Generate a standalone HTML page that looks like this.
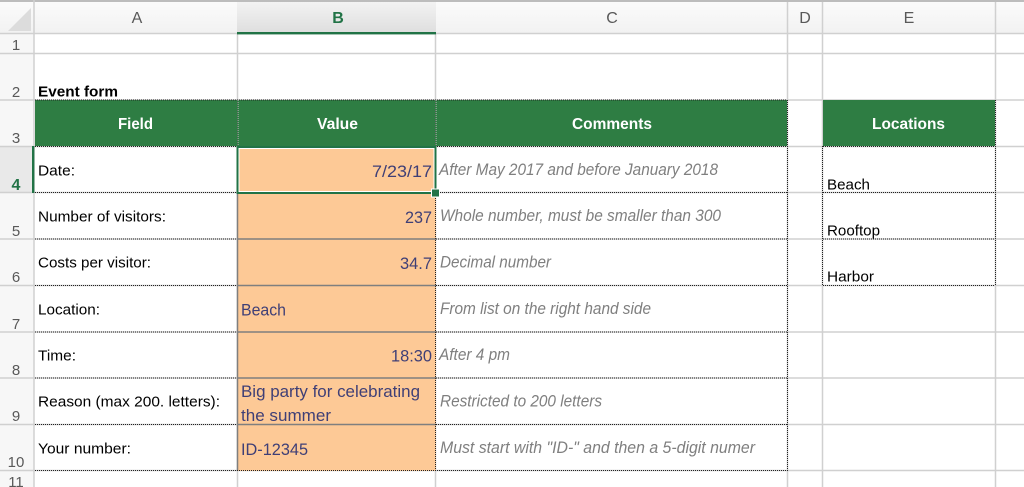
<!DOCTYPE html>
<html lang="en"><head><meta charset="utf-8"><title>Event form</title>
<style>
html,body{margin:0;padding:0;background:#fff;width:1024px;height:487px;overflow:hidden}
svg{display:block}
text{font-family:"Liberation Sans",sans-serif}
.h{font-size:16px;fill:#595959;text-anchor:middle}
.r{font-size:15px;fill:#595959;text-anchor:middle}
.l{font-size:15px;fill:#000}
.w{font-size:15.5px;fill:#fff;font-weight:bold}
.v{font-size:17px;fill:#3f3f76}
.c{font-size:16.5px;fill:#7f7f7f;font-style:italic}
.g{stroke:#d0d0d0;stroke-width:1.5;fill:none}
.d{stroke:#222;stroke-width:1;stroke-dasharray:1 1;fill:none}
.b{stroke:#7f7f7f;stroke-width:1.5;fill:none}
</style></head><body>
<svg width="1024" height="487" viewBox="0 0 1024 487" xmlns="http://www.w3.org/2000/svg">
<defs>
<linearGradient id="hd" x1="0" y1="0" x2="0" y2="1"><stop offset="0" stop-color="#fbfbfb"/><stop offset="1" stop-color="#f2f2f2"/></linearGradient>
<linearGradient id="hs" x1="0" y1="0" x2="0" y2="1"><stop offset="0" stop-color="#f3f3f3"/><stop offset="1" stop-color="#dedede"/></linearGradient>
</defs>
<rect x="0" y="2" width="1024" height="31" fill="url(#hd)"/>
<rect x="0" y="0" width="1024" height="2" fill="#bdbdbd"/>
<rect x="0" y="33" width="34" height="454" fill="#f7f7f7"/>
<rect x="0" y="147" width="34" height="46" fill="#e9e9e9"/>
<rect x="237" y="2" width="199" height="31" fill="url(#hs)"/>
<polygon points="31,8 31,31 8,31" fill="#dcdcdc"/>

<!-- grid -->
<path class="g" d="M34 0V487M237.5 33V487M435.5 33V487M787.5 2V487M822.5 2V487M995.5 2V487"/>
<path class="g" d="M0 33.5H1024M0 53.5H1024M0 100H1024M0 146.5H1024M0 192.5H1024M0 239H1024M0 285.5H1024M0 332H1024M0 378H1024M0 424.5H1024M0 470.5H1024"/>

<!-- header fills -->
<rect x="35" y="100" width="752" height="46" fill="#2e7d43"/>
<rect x="823" y="100" width="172" height="46" fill="#2e7d43"/>
<!-- value fill -->
<rect x="238" y="147" width="198" height="324" fill="#fdc996"/>

<!-- body borders -->
<path class="b" d="M238 192.5H436M238 239H436M238 285.5H436M238 332H436M238 378H436M238 424.5H436M237.5 193V471"/>
<path class="d" d="M35 100H787M35 146.5H787M35 192.5H237M35 239H237M35 285.5H237M35 332H237M35 378H237M35 424.5H237M35 470.5H787"/>
<path class="d" d="M436 192.5H787M436 239H787M436 285.5H787M436 332H787M436 378H787M436 424.5H787"/>
<path class="d" d="M237.5 100V146M435.5 100V471M787.5 100V471"/>
<path class="d" d="M823 146.5H995M823 192.5H995M823 239H995M823 285.5H995M822.5 146V285M995.5 100V285"/>
<path d="M238 100V146M436 100V146" stroke="#fff" stroke-width="1" stroke-dasharray="1 1" fill="none" opacity=".7"/>

<!-- selection -->
<rect x="237" y="32" width="199" height="2.4" fill="#217346"/>
<rect x="32" y="146" width="2.4" height="47" fill="#217346"/>
<rect x="237.5" y="147" width="198" height="46" fill="none" stroke="#217346" stroke-width="2"/>
<rect x="239" y="148.500" width="195" height="43" fill="none" stroke="#fff" stroke-width="1"/>
<rect x="431.500" y="189" width="8" height="8" fill="#217346" stroke="#fff" stroke-width="1"/>

<!-- column letters -->
<text class="h" x="137" y="23">A</text>
<text class="h" x="338" y="23" style="font-weight:bold;fill:#217346">B</text>
<text class="h" x="612" y="23">C</text>
<text class="h" x="805" y="23">D</text>
<text class="h" x="909" y="23">E</text>

<!-- row numbers -->
<text class="r" x="16" y="50">1</text>
<text class="r" x="16" y="97">2</text>
<text class="r" x="16" y="143">3</text>
<text class="r" x="16" y="190" style="font-weight:bold;fill:#217346;font-size:16px">4</text>
<text class="r" x="16" y="236">5</text>
<text class="r" x="16" y="282">6</text>
<text class="r" x="16" y="329">7</text>
<text class="r" x="16" y="375">8</text>
<text class="r" x="16" y="421">9</text>
<text class="r" x="16" y="467">10</text>
<text class="r" x="16" y="487">11</text>

<!-- labels -->
<text x="38" y="96.500" style="font-size:15px;font-weight:bold;fill:#000" textLength="80" lengthAdjust="spacingAndGlyphs">Event form</text>
<text class="w" x="118" y="129" textLength="35" lengthAdjust="spacingAndGlyphs">Field</text>
<text class="w" x="317" y="129" textLength="41" lengthAdjust="spacingAndGlyphs">Value</text>
<text class="w" x="572" y="129" textLength="80" lengthAdjust="spacingAndGlyphs">Comments</text>
<text class="w" x="872" y="129" textLength="73" lengthAdjust="spacingAndGlyphs">Locations</text>

<text class="l" x="38" y="175.500" textLength="37" lengthAdjust="spacingAndGlyphs">Date:</text>
<text class="l" x="38" y="221.500" textLength="128" lengthAdjust="spacingAndGlyphs">Number of visitors:</text>
<text class="l" x="38" y="267.500" textLength="113" lengthAdjust="spacingAndGlyphs">Costs per visitor:</text>
<text class="l" x="38" y="314.500" textLength="62" lengthAdjust="spacingAndGlyphs">Location:</text>
<text class="l" x="38" y="360.500" textLength="38" lengthAdjust="spacingAndGlyphs">Time:</text>
<text class="l" x="38" y="406.500" textLength="182" lengthAdjust="spacingAndGlyphs">Reason (max 200. letters):</text>
<text class="l" x="38" y="453.500" textLength="93" lengthAdjust="spacingAndGlyphs">Your number:</text>

<text class="l" x="827" y="189.500" textLength="43" lengthAdjust="spacingAndGlyphs">Beach</text>
<text class="l" x="827" y="235.500" textLength="53" lengthAdjust="spacingAndGlyphs">Rooftop</text>
<text class="l" x="827" y="281.500" textLength="47" lengthAdjust="spacingAndGlyphs">Harbor</text>

<!-- values -->
<text class="v" x="372" y="177" textLength="60" lengthAdjust="spacingAndGlyphs">7/23/17</text>
<text class="v" x="405" y="223" textLength="27" lengthAdjust="spacingAndGlyphs">237</text>
<text class="v" x="400" y="269" textLength="32" lengthAdjust="spacingAndGlyphs">34.7</text>
<text class="v" x="241" y="315.500" textLength="45" lengthAdjust="spacingAndGlyphs">Beach</text>
<text class="v" x="391" y="361.500" textLength="41" lengthAdjust="spacingAndGlyphs">18:30</text>
<text class="v" x="241" y="397" textLength="179" lengthAdjust="spacingAndGlyphs">Big party for celebrating</text>
<text class="v" x="241" y="421" textLength="90" lengthAdjust="spacingAndGlyphs">the summer</text>
<text class="v" x="241" y="455" textLength="67" lengthAdjust="spacingAndGlyphs">ID-12345</text>

<!-- comments -->
<text class="c" x="439" y="175" textLength="279" lengthAdjust="spacingAndGlyphs">After May 2017 and before January 2018</text>
<text class="c" x="440" y="221" textLength="281" lengthAdjust="spacingAndGlyphs">Whole number, must be smaller than 300</text>
<text class="c" x="440" y="267.500" textLength="111" lengthAdjust="spacingAndGlyphs">Decimal number</text>
<text class="c" x="440" y="314" textLength="211" lengthAdjust="spacingAndGlyphs">From list on the right hand side</text>
<text class="c" x="439" y="360" textLength="71" lengthAdjust="spacingAndGlyphs">After 4 pm</text>
<text class="c" x="440" y="406.500" textLength="162" lengthAdjust="spacingAndGlyphs">Restricted to 200 letters</text>
<text class="c" x="440" y="453" textLength="315" lengthAdjust="spacingAndGlyphs">Must start with "ID-" and then a 5-digit numer</text>
</svg>
</body></html>
